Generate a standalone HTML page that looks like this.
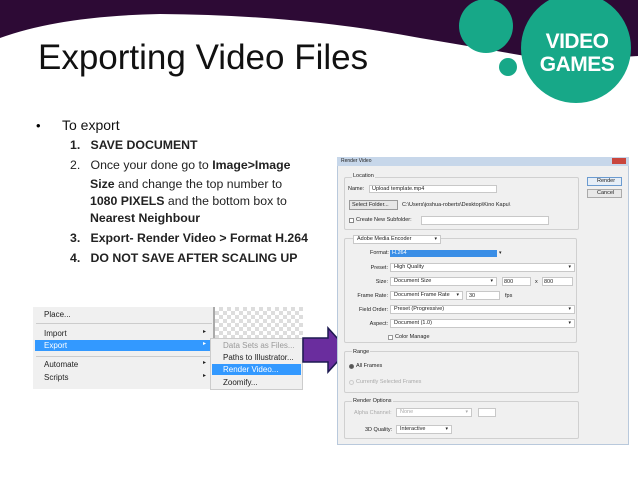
<!DOCTYPE html>
<html><head><meta charset="utf-8"><style>
*{margin:0;padding:0;box-sizing:border-box}
body{width:638px;height:478px;background:#fff;position:relative;overflow:hidden;font-family:"Liberation Sans",sans-serif}
.a{position:absolute;white-space:nowrap}
.t{font-size:12.3px;color:#222}
.d{font-size:5.5px;color:#222;position:absolute;white-space:nowrap;line-height:8px}
.in{position:absolute;background:#fff;border:1px solid #c8c8c8;height:8px}
.sel{position:absolute;background:#fff;border:1px solid #c8c8c8;height:9px;font-size:5.5px;line-height:7px;padding-left:3px;color:#222}
.sel:after{content:"▾";position:absolute;right:3px;top:0;font-size:5px}
.grp{position:absolute;border:1px solid #d0d0d0;border-radius:2px}
.m{position:absolute;font-size:8px;color:#222;white-space:nowrap;line-height:11px}
</style></head><body>
<svg class="a" style="left:0;top:0" width="638" height="110">
<path d="M0 0H638V56Q600 58 560 62Q480 48 420 38Q300 15 160 14Q60 16 0 38Z" fill="#2d0a35"/>
<circle cx="486" cy="26" r="27" fill="#17a888"/>
<circle cx="508" cy="67" r="9" fill="#17a888"/>
<circle cx="576" cy="48" r="55" fill="#17a888"/>
<text x="577" y="48" text-anchor="middle" font-family="Liberation Sans" font-weight="bold" font-size="21" fill="#fff" letter-spacing="-0.5">VIDEO</text>
<text x="577" y="71" text-anchor="middle" font-family="Liberation Sans" font-weight="bold" font-size="21" fill="#fff" letter-spacing="-0.5">GAMES</text>
</svg>
<div class="a" style="left:38px;top:38px;font-size:35px;color:#111;letter-spacing:0px">Exporting Video Files</div>
<div class="a" style="left:36px;top:118px;font-size:13px">•</div>
<div class="a" style="left:62px;top:117px;font-size:14px;color:#111">To export</div>
<div class="a t" style="left:70px;top:138px"><b>1.&nbsp;&nbsp; SAVE DOCUMENT</b></div>
<div class="a t" style="left:70px;top:158px">2.&nbsp;&nbsp; Once your done go to <b>Image&gt;Image</b></div>
<div class="a t" style="left:90px;top:177px"><b>Size</b> and change the top number to</div>
<div class="a t" style="left:90px;top:194px"><b>1080 PIXELS</b> and the bottom box to</div>
<div class="a t" style="left:90px;top:211px"><b>Nearest Neighbour</b></div>
<div class="a t" style="left:70px;top:231px"><b>3.&nbsp;&nbsp; Export- Render Video &gt; Format H.264</b></div>
<div class="a t" style="left:70px;top:251px"><b>4.&nbsp;&nbsp; DO NOT SAVE AFTER SCALING UP</b></div>

<!-- menu -->
<div class="a" style="left:33px;top:307px;width:182px;height:82px;background:#f0f0f0"></div>
<div class="a" style="left:215px;top:307px;width:88px;height:31px;background:repeating-conic-gradient(#ddd 0 25%,#fff 0 50%) 0 0/8px 8px"></div>
<div class="a" style="left:213px;top:307px;width:2px;height:31px;background:#aaa"></div>
<div class="m" style="left:44px;top:309px">Place...</div>
<div class="a" style="left:36px;top:323px;width:176px;height:1px;background:#ccc"></div>
<div class="m" style="left:44px;top:328px">Import</div>
<div class="m" style="left:203px;top:327px;font-size:6px">▸</div>
<div class="a" style="left:35px;top:340px;width:178px;height:11px;background:#3399ff"></div>
<div class="m" style="left:44px;top:340px;color:#fff">Export</div>
<div class="m" style="left:203px;top:339px;font-size:6px;color:#fff">▸</div>
<div class="a" style="left:36px;top:356px;width:176px;height:1px;background:#ccc"></div>
<div class="m" style="left:44px;top:359px">Automate</div>
<div class="m" style="left:203px;top:358px;font-size:6px">▸</div>
<div class="m" style="left:44px;top:372px">Scripts</div>
<div class="m" style="left:203px;top:371px;font-size:6px">▸</div>
<div class="a" style="left:210px;top:338px;width:93px;height:52px;background:#f0f0f0;border:1px solid #ccc"></div>
<div class="m" style="left:223px;top:340px;color:#999">Data Sets as Files...</div>
<div class="m" style="left:223px;top:352px">Paths to Illustrator...</div>
<div class="a" style="left:212px;top:364px;width:89px;height:11px;background:#3399ff"></div>
<div class="m" style="left:223px;top:364px;color:#fff">Render Video...</div>
<div class="m" style="left:223px;top:377px">Zoomify...</div>

<svg class="a" style="left:300px;top:325px" width="52" height="50"><path d="M3 13H28V3L48 25L28 47V37H3Z" fill="#6a2d9e" stroke="#1d1a50" stroke-width="1.5"/></svg>

<!-- dialog -->
<div class="a" style="left:337px;top:157px;width:292px;height:288px;background:#f0f0f0;border:1px solid #b9c9dc"></div>
<div class="a" style="left:337px;top:157px;width:292px;height:9px;background:#c7d7ea"></div>
<div class="d" style="left:341px;top:158px;font-size:5px;line-height:7px">Render Video</div>
<div class="a" style="left:612px;top:158px;width:14px;height:6px;background:#c9463d"></div>
<div class="grp" style="left:344px;top:177px;width:235px;height:53px"></div>
<div class="d" style="left:352px;top:172px;background:#f0f0f0;padding:0 1px">Location</div>
<div class="d" style="left:348px;top:185px">Name:</div>
<div class="in" style="left:369px;top:185px;width:128px"></div>
<div class="d" style="left:372px;top:185px">Upload template.mp4</div>
<div class="a" style="left:349px;top:200px;width:49px;height:10px;background:#e6e6e6;border:1px solid #999"></div>
<div class="d" style="left:352px;top:201px">Select Folder...</div>
<div class="d" style="left:402px;top:201px">C:\Users\joshua-roberts\Desktop\Kino Kapu\</div>
<div class="a" style="left:349px;top:218px;width:5px;height:5px;border:1px solid #888;background:#fff"></div>
<div class="d" style="left:356px;top:216px">Create New Subfolder:</div>
<div class="in" style="left:421px;top:216px;width:128px;height:9px"></div>
<div class="a" style="left:587px;top:177px;width:35px;height:9px;background:#e6eef7;border:1px solid #6b9bd0"></div>
<div class="d" style="left:597px;top:177px">Render</div>
<div class="a" style="left:587px;top:189px;width:35px;height:9px;background:#e8e8e8;border:1px solid #aaa"></div>
<div class="d" style="left:597px;top:189px">Cancel</div>

<div class="grp" style="left:344px;top:238px;width:233px;height:105px"></div>
<div class="sel" style="left:353px;top:235px;width:88px">Adobe Media Encoder</div>
<div class="d" style="left:370px;top:249px;width:18px;text-align:right">Format:</div>
<div class="a" style="left:390px;top:250px;width:107px;height:7px;background:#3a8ee6"></div>
<div class="d" style="left:392px;top:249px;color:#fff">H.264</div>
<div class="d" style="left:499px;top:249px;font-size:5px">▾</div>
<div class="d" style="left:360px;top:264px;width:28px;text-align:right">Preset:</div>
<div class="sel" style="left:390px;top:263px;width:185px">High Quality</div>
<div class="d" style="left:360px;top:278px;width:28px;text-align:right">Size:</div>
<div class="sel" style="left:390px;top:277px;width:107px">Document Size</div>
<div class="in" style="left:502px;top:277px;width:29px;height:9px"></div><div class="d" style="left:504px;top:278px">800</div>
<div class="d" style="left:535px;top:278px">x</div>
<div class="in" style="left:542px;top:277px;width:31px;height:9px"></div><div class="d" style="left:544px;top:278px">800</div>
<div class="d" style="left:350px;top:292px;width:38px;text-align:right">Frame Rate:</div>
<div class="sel" style="left:390px;top:291px;width:73px">Document Frame Rate</div>
<div class="in" style="left:466px;top:291px;width:34px;height:9px"></div><div class="d" style="left:469px;top:292px">30</div>
<div class="d" style="left:505px;top:292px">fps</div>
<div class="d" style="left:350px;top:306px;width:38px;text-align:right">Field Order:</div>
<div class="sel" style="left:390px;top:305px;width:185px">Preset (Progressive)</div>
<div class="d" style="left:350px;top:320px;width:38px;text-align:right">Aspect:</div>
<div class="sel" style="left:390px;top:319px;width:185px">Document (1.0)</div>
<div class="a" style="left:388px;top:335px;width:5px;height:5px;border:1px solid #999;background:#fff"></div>
<div class="d" style="left:395px;top:333px">Color Manage</div>

<div class="grp" style="left:344px;top:351px;width:235px;height:42px"></div>
<div class="d" style="left:352px;top:348px;background:#f0f0f0;padding:0 1px">Range</div>
<div class="a" style="left:349px;top:364px;width:5px;height:5px;border-radius:50%;border:1px solid #666;background:#555"></div>
<div class="d" style="left:356px;top:362px">All Frames</div>
<div class="a" style="left:349px;top:380px;width:5px;height:5px;border-radius:50%;border:1px solid #ccc"></div>
<div class="d" style="left:356px;top:378px;color:#aaa">Currently Selected Frames</div>

<div class="grp" style="left:344px;top:401px;width:235px;height:38px"></div>
<div class="d" style="left:352px;top:397px;background:#f0f0f0;padding:0 1px">Render Options</div>
<div class="d" style="left:354px;top:409px;color:#aaa">Alpha Channel:</div>
<div class="sel" style="left:396px;top:408px;width:76px;color:#aaa">None</div>
<div class="in" style="left:478px;top:408px;width:18px;height:9px"></div>
<div class="d" style="left:365px;top:426px">3D Quality:</div>
<div class="sel" style="left:396px;top:425px;width:56px">Interactive</div>
</body></html>
